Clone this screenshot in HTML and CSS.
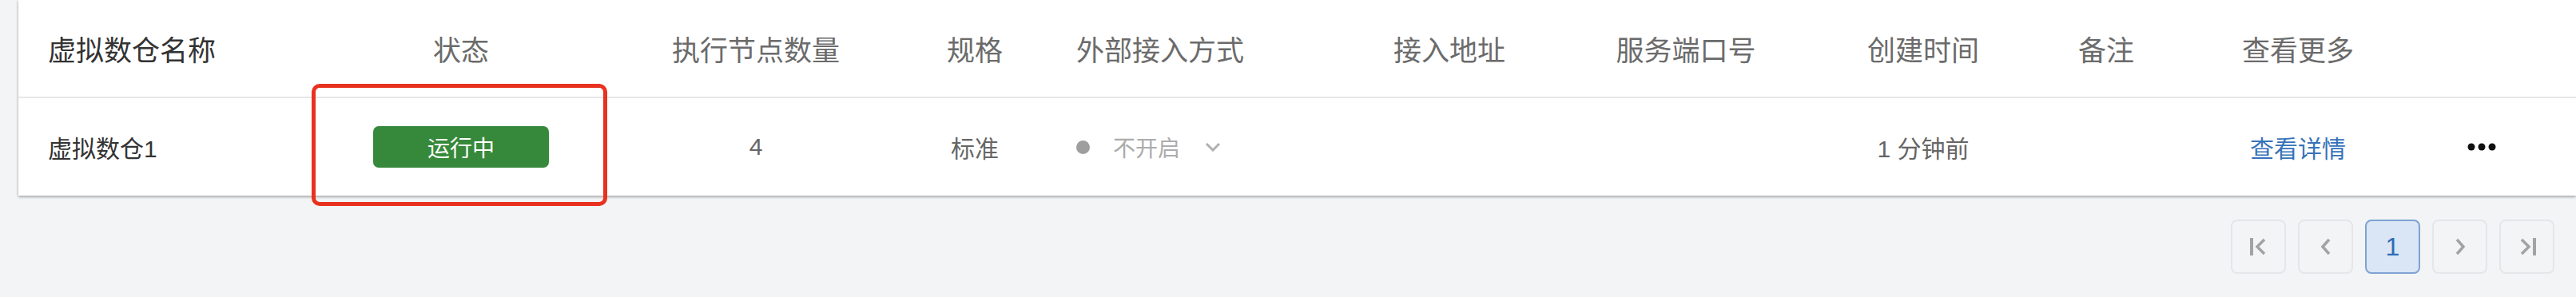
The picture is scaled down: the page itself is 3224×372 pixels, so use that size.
FILE: index.html
```html
<!DOCTYPE html>
<html lang="zh-CN">
<head>
  <meta charset="UTF-8" />
  <title>虚拟数仓列表</title>
  <link rel="stylesheet" href="styles.css">
</head>
<body>

  <div class="page">
    <div class="card">
      <!-- 表头 -->
      <div class="row head">
        <div class="cell name">虚拟数仓名称</div>
        <div class="cell">状态</div>
        <div class="cell">执行节点数量</div>
        <div class="cell">规格</div>
        <div class="cell left">外部接入方式</div>
        <div class="cell">接入地址</div>
        <div class="cell">服务端口号</div>
        <div class="cell">创建时间</div>
        <div class="cell">备注</div>
        <div class="cell">查看更多</div>
        <div class="cell"></div>
        <div class="cell"></div>
      </div>

      <!-- 数据行 -->
      <div class="row body">
        <div class="cell name">虚拟数仓1</div>
        <div class="cell status">
          <span class="badge">运行中</span>
          <span class="mark"></span>
        </div>
        <div class="cell">4</div>
        <div class="cell">标准</div>
        <div class="cell left">
          <span class="select">
            <span class="dot"></span>
            <span class="select-text">不开启</span>
            <svg class="caret" width="20" height="12" viewBox="0 0 20 12"><polyline points="2,2 10,10 18,2" fill="none" stroke="#b0b0b0" stroke-width="3"/></svg>
          </span>
        </div>
        <div class="cell"></div>
        <div class="cell"></div>
        <div class="cell">1 分钟前</div>
        <div class="cell"></div>
        <div class="cell"><a class="link" href="#">查看详情</a></div>
        <div class="cell">
          <svg width="36" height="10" viewBox="0 0 36 10"><circle cx="5" cy="5" r="4.5" fill="#111"/><circle cx="18" cy="5" r="4.5" fill="#111"/><circle cx="31" cy="5" r="4.5" fill="#111"/></svg>
        </div>
        <div class="cell"></div>
      </div>
    </div>

    <!-- 分页 -->
    <div class="pager">
      <span class="pg">
        <svg width="24" height="24" viewBox="0 0 24 24"><line x1="3" y1="1" x2="3" y2="23" stroke="#a3a3a3" stroke-width="4"/><polyline points="19,3 10,12 19,21" fill="none" stroke="#a3a3a3" stroke-width="3.5"/></svg>
      </span>
      <span class="pg">
        <svg width="24" height="24" viewBox="0 0 24 24"><polyline points="16,3 8,12 16,21" fill="none" stroke="#a3a3a3" stroke-width="3.5"/></svg>
      </span>
      <span class="pg active">1</span>
      <span class="pg">
        <svg width="24" height="24" viewBox="0 0 24 24"><polyline points="8,3 16,12 8,21" fill="none" stroke="#a3a3a3" stroke-width="3.5"/></svg>
      </span>
      <span class="pg">
        <svg width="24" height="24" viewBox="0 0 24 24"><polyline points="5,3 14,12 5,21" fill="none" stroke="#a3a3a3" stroke-width="3.5"/><line x1="21" y1="1" x2="21" y2="23" stroke="#a3a3a3" stroke-width="4"/></svg>
      </span>
    </div>
  </div>

</body>
</html>
```

FILE: styles.css
```css
body {
  margin: 0;
  padding: 0;
  background: #f3f4f6;
  font-family: 'Liberation Sans', 'Noto Sans CJK SC', sans-serif;
  color: #666;
  height: 372px;
  overflow: hidden;
}

.page {
  padding-left: 23px;
}

.card {
  background: #fff;
  box-shadow: 0 2px 3px rgba(0,0,0,0.28), -1px 0 3px rgba(0,0,0,0.08);
}

.row {
  display: grid;
  grid-template-columns: 404px 300px 438px 110px 425px 228px 364px 230px 228px 252px 208px 1fr;
}

.head {
  height: 121px;
  border-bottom: 2px solid #e7e7e7;
  font-size: 35px;
  color: #6b6b6b;
}

.body {
  height: 122px;
  font-size: 30px;
}

.cell {
  display: flex;
  align-items: center;
  justify-content: center;
  white-space: nowrap;
}

.cell.name {
  justify-content: flex-start;
  padding-left: 37px;
  color: #333;
}

.cell.left {
  justify-content: flex-start;
  padding-left: 72px;
}

.status {
  position: relative;
}

.badge {
  display: flex;
  align-items: center;
  justify-content: center;
  width: 220px;
  height: 52px;
  border-radius: 7px;
  background: #36893b;
  color: #fff;
  font-size: 28px;
}

/* 标注框 */
.mark {
  position: absolute;
  left: -37px;
  right: -33px;
  top: -18px;
  bottom: -13px;
  border: 5px solid #e8321f;
  border-radius: 10px;
}

.select {
  display: flex;
  align-items: center;
  color: #acacac;
  font-size: 28px;
}

.dot {
  width: 17px;
  height: 17px;
  border-radius: 50%;
  background: #9e9e9e;
  margin-right: 29px;
}

.caret {
  margin-left: 31px;
}

.link {
  color: #3672b9;
  text-decoration: none;
}

.pager {
  display: flex;
  justify-content: flex-end;
  gap: 15px;
  margin-top: 30px;
  padding-right: 27px;
}

.pg {
  box-sizing: border-box;
  width: 69px;
  height: 68px;
  display: flex;
  align-items: center;
  justify-content: center;
  border: 2px solid #e4e6e9;
  border-radius: 8px;
  background: #f3f4f6;
}

.pg.active {
  background: #dae6f5;
  border-color: #7ea3d3;
  color: #2f6db5;
  font-size: 32px;
}
```
